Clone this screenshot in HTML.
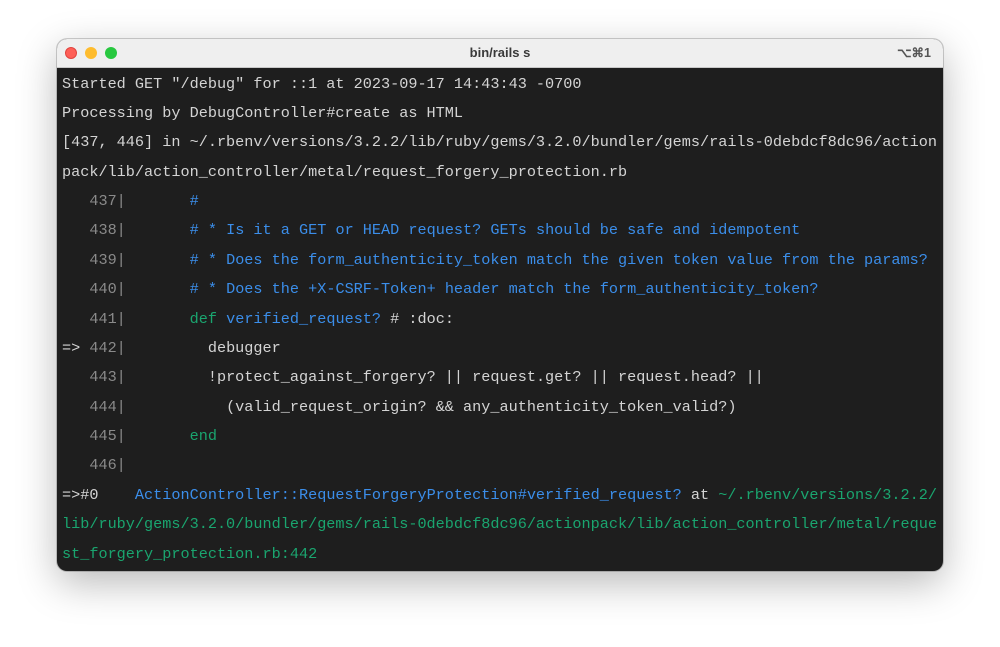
<!DOCTYPE html>
<html><head><meta charset="utf-8">
<style>
html,body{margin:0;padding:0;background:#fff;width:1000px;height:647px;overflow:hidden}
.win{position:absolute;left:57px;top:39px;width:886px;height:532px;border-radius:10px;background:#1e1e1e;box-shadow:0 12px 40px rgba(0,0,0,.28),0 0 0 1px rgba(0,0,0,.18);overflow:hidden}
.bar{height:28px;background:#efefef;border-bottom:1px solid #c8c8c8;position:relative;font-family:"Liberation Sans",sans-serif}
.dot{position:absolute;top:8px;width:12px;height:12px;border-radius:50%}
.title{position:absolute;left:0;right:0;top:0;line-height:28px;text-align:center;font-size:13px;font-weight:bold;color:#3a3a3a}
.kb{position:absolute;right:12px;top:0;line-height:28px;font-size:12.5px;font-weight:bold;color:#555}
.t{position:absolute;left:5px;top:30.5px;font-family:"Liberation Mono",monospace;font-size:15.2px;color:#d4d4d4}
.t div{height:29.375px;line-height:29.375px;white-space:pre}
.b{color:#3b8eea}.g{color:#1aa56f}.n{color:#8a8a8a}
</style></head><body>
<div class="win">
<div class="bar">
<div class="dot" style="left:8px;background:#fe5f57;border:0.5px solid #e0443e;box-sizing:border-box"></div>
<div class="dot" style="left:28px;background:#febc2e"></div>
<div class="dot" style="left:48px;background:#28c840"></div>
<div class="title">bin/rails s</div>
<div class="kb">⌥⌘1</div>
</div>
<div class="t">
<div>Started GET "/debug" for ::1 at 2023-09-17 14:43:43 -0700</div>
<div>Processing by DebugController#create as HTML</div>
<div>[437, 446] in ~/.rbenv/versions/3.2.2/lib/ruby/gems/3.2.0/bundler/gems/rails-0debdcf8dc96/action</div>
<div>pack/lib/action_controller/metal/request_forgery_protection.rb</div>
<div><span class="n">   437|</span>       <span class="b">#</span></div>
<div><span class="n">   438|</span>       <span class="b"># * Is it a GET or HEAD request? GETs should be safe and idempotent</span></div>
<div><span class="n">   439|</span>       <span class="b"># * Does the form_authenticity_token match the given token value from the params?</span></div>
<div><span class="n">   440|</span>       <span class="b"># * Does the +X-CSRF-Token+ header match the form_authenticity_token?</span></div>
<div><span class="n">   441|</span>       <span class="g">def</span> <span class="b">verified_request?</span> # :doc:</div>
<div>=&gt; <span class="n">442|</span>         debugger</div>
<div><span class="n">   443|</span>         !protect_against_forgery? || request.get? || request.head? ||</div>
<div><span class="n">   444|</span>           (valid_request_origin? &amp;&amp; any_authenticity_token_valid?)</div>
<div><span class="n">   445|</span>       <span class="g">end</span></div>
<div><span class="n">   446|</span></div>
<div>=&gt;#0    <span class="b">ActionController::RequestForgeryProtection#verified_request?</span> at <span class="g">~/.rbenv/versions/3.2.2/</span></div>
<div><span class="g">lib/ruby/gems/3.2.0/bundler/gems/rails-0debdcf8dc96/actionpack/lib/action_controller/metal/reque</span></div>
<div><span class="g">st_forgery_protection.rb:442</span></div>
</div>
</div>
</body></html>
